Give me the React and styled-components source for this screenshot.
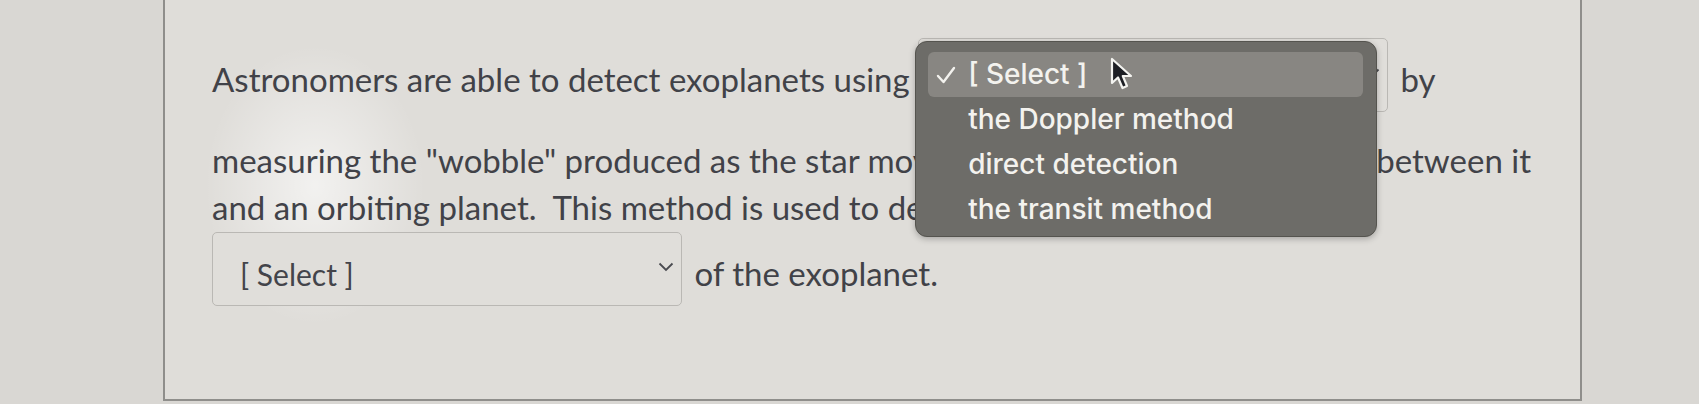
import React from "react";
import styled, { createGlobalStyle } from "styled-components";

const GlobalStyle = createGlobalStyle`
  body {
    margin: 0;
    background: #d8d6d2;
    font-family: "Lato", "Liberation Sans", sans-serif;
  }
`;

const Page = styled.div`
  width: 1699px;
  height: 404px;
  overflow: hidden;
  background: #d9d7d3;
`;

const Panel = styled.div`
  box-sizing: border-box;
  margin-left: 163px;
  width: 1419px;
  height: 401px;
  border-left: 2px solid #8f8e8b;
  border-right: 2px solid #8f8e8b;
  border-bottom: 2px solid #8f8e8b;
  background:
    radial-gradient(ellipse 110px 140px at 150px 185px, rgba(255, 255, 255, 0.6), rgba(255, 255, 255, 0) 100%),
    #dfddd9;
  padding: 37px 20px 0 47px;
`;

const Question = styled.p`
  margin: 0;
  font-size: 33px;
  line-height: 47px;
  color: #414248;
  white-space: nowrap;
`;

const SelectBox = styled.span`
  position: relative;
  display: inline-flex;
  align-items: flex-start;
  justify-content: space-between;
  box-sizing: border-box;
  width: 470px;
  height: 74px;
  margin: 1px 4px 25px 0;
  padding: 23px 7px 0 27px;
  vertical-align: baseline;
  border: 1.5px solid #bab8b4;
  border-radius: 5px;
  background: #e0deda;
`;

const SelectText = styled.span`
  font-size: 30px;
  line-height: 36px;
  color: #43444a;
`;

const ChevronIcon = styled.svg`
  flex: none;
  margin-top: 6px;
`;

const Chevron = () => (
  <ChevronIcon width="16" height="10" viewBox="0 0 16 10">
    <path d="M1.5 1.5 L8 8 L14.5 1.5" fill="none" stroke="#4a4b50" strokeWidth="1.8" />
  </ChevronIcon>
);

const Popup = styled.div`
  position: absolute;
  left: -4px;
  top: 2px;
  width: 462px;
  height: 196px;
  box-sizing: border-box;
  padding: 10px 13px 4px 12px;
  background: #6d6c68;
  border: 1px solid #55544f;
  border-radius: 12px;
  box-shadow: 0 2px 6px rgba(0, 0, 0, 0.25);
  font-family: "Inter", "Liberation Sans", sans-serif;
  font-weight: 500;
  z-index: 2;
`;

const Option = styled.div`
  display: flex;
  align-items: center;
  height: 45px;
  padding-left: 8px;
  border-radius: 6px;
  background: ${(p) => (p.$active ? "#888682" : "transparent")};
  color: #f3f2ee;
  font-size: 28px;
  line-height: 45px;
`;

const Check = styled.span`
  width: 32px;
  flex: none;
  display: flex;
  align-items: center;
`;

const Cursor = styled.svg`
  position: absolute;
  left: 194px;
  top: 15px;
`;

const options = ["[ Select ]", "the Doppler method", "direct detection", "the transit method"];

const DropdownOpen = () => (
  <SelectBox>
    <SelectText>[ Select ]</SelectText>
    <Chevron />
    <Popup>
      {options.map((o, i) => (
        <Option key={o} $active={i === 0}>
          <Check>
            {i === 0 && (
              <svg width="20" height="18" viewBox="0 0 20 18">
                <path d="M2 10 L7.5 16 L18 2" fill="none" stroke="#f3f2ee" strokeWidth="2.4" strokeLinecap="round" strokeLinejoin="round" />
              </svg>
            )}
          </Check>
          {o}
        </Option>
      ))}
      <Cursor width="26" height="34" viewBox="0 0 26 34">
        <path d="M2 2 L2 26 L8 20.5 L12.5 31 L17 29 L12.8 19 L21 19 Z" fill="#1d1f24" stroke="#f4f4f0" strokeWidth="2.2" strokeLinejoin="round" />
      </Cursor>
    </Popup>
  </SelectBox>
);

const DropdownClosed = () => (
  <SelectBox>
    <SelectText>[ Select ]</SelectText>
    <Chevron />
  </SelectBox>
);

export default function App() {
  return (
    <>
      <GlobalStyle />
      <Page>
        <Panel>
          <Question>
            Astronomers are able to detect exoplanets using <DropdownOpen /> by
            <br />
            measuring the "wobble" produced as the star moves due to the gravitational pull between it
            <br />
            and an orbiting planet.&nbsp; This method is used to determine the
            <br />
            <DropdownClosed /> of the exoplanet.
          </Question>
        </Panel>
      </Page>
    </>
  );
}
